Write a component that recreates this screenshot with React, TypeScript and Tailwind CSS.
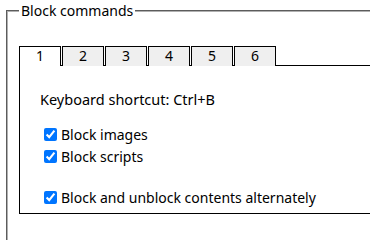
import { useState } from "react";

const tabs = ["1", "2", "3", "4", "5", "6"];

function Check({ label, defaultChecked }: { label: string; defaultChecked?: boolean }) {
  const [on, setOn] = useState(!!defaultChecked);
  return (
    <label className="flex h-[22px] items-center">
      <input
        type="checkbox"
        checked={on}
        onChange={(e) => setOn(e.target.checked)}
        className="ml-[4px] mr-[4px] h-[13px] w-[13px]"
      />
      <span>{label}</span>
    </label>
  );
}

export default function App() {
  const [active, setActive] = useState(0);
  return (
    <div
      className="h-[240px] w-[370px] overflow-hidden bg-white text-[14px] text-black"
      style={{ fontFamily: '"Noto Sans", "DejaVu Sans", sans-serif' }}
    >
      <fieldset className="ml-[6px] w-[420px] border-2 border-[#b0b0b0] [border-style:groove] pl-[11px] pb-20">
        <legend className="px-[2px] leading-[22px]">Block commands</legend>

        <div className="mt-[24px] flex gap-px">
          {tabs.map((t, i) => (
            <button
              key={t}
              onClick={() => setActive(i)}
              className={
                "relative flex h-[20px] w-[42px] items-start justify-center border border-b-0 border-black leading-[18px] " +
                (i === active ? "z-10 bg-white" : "bg-[#efefef]")
              }
            >
              {t}
            </button>
          ))}
        </div>

        <div className="-mt-px h-[149px] border border-black pl-[20px] pt-[23px]">
          <div className="flex h-[22px] items-center text-[14.5px]">Keyboard shortcut: Ctrl+B</div>
          <div className="mt-[12px]">
            <Check label="Block images" defaultChecked />
            <Check label="Block scripts" defaultChecked />
          </div>
          <div className="mt-[19px]">
            <Check label="Block and unblock contents alternately" defaultChecked />
          </div>
        </div>
      </fieldset>
    </div>
  );
}
